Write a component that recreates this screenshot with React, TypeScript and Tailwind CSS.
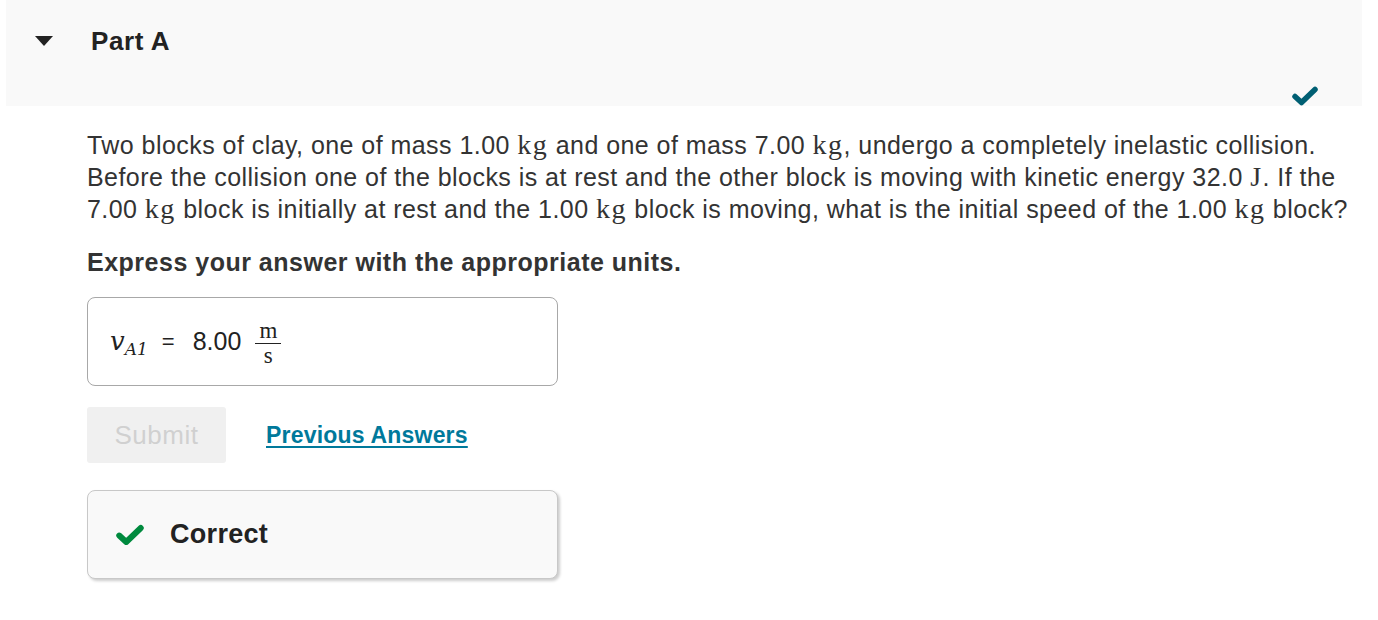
import React from 'react'

const sans = { fontFamily: '"Liberation Sans", Arial, sans-serif' }
const serif = '[font-family:"DejaVu_Serif","Liberation_Serif",serif]'

function Unit({ children }: { children: React.ReactNode }) {
  return <span className="font-['Liberation_Serif',serif] text-[28px] tracking-[1.5px] leading-none">{children}</span>
}

function Check({ className }: { className: string }) {
  return (
    <svg viewBox="0 0 26 20" className={className} fill="none">
      <path d="M3 10.5 L9.5 16.5 L23 3.5" stroke="currentColor" strokeWidth="5.5" strokeLinecap="round" strokeLinejoin="round" />
    </svg>
  )
}

export default function App() {
  return (
    <div className="w-[1378px] h-[620px] bg-white text-[#333]" style={sans}>
      <div className="mx-[6px] w-[1356px] h-[106px] bg-[#f9f9f9] relative">
        <div className="flex items-center pt-[26px]">
          <svg viewBox="0 0 18 10" className="ml-[29px] w-[18px] h-[10px] text-[#222]">
            <path d="M0 0 H18 L9 10 Z" fill="currentColor" />
          </svg>
          <h2 className="ml-[38px] text-[26px] tracking-[0.6px] font-bold text-[#222] leading-[30px]">Part A</h2>
        </div>
        <Check className="absolute right-[44px] top-[86px] w-[26px] h-[20px] text-[#005f73]" />
      </div>

      <div className="pl-[87px] pr-[20px]">
        <p className="mt-[23px] text-[25px] leading-[32px] tracking-[0.45px] text-[#333] whitespace-nowrap">
          Two blocks of clay, one of mass 1.00 <Unit>kg</Unit> and one of mass 7.00 <Unit>kg</Unit>, undergo a completely inelastic collision.
          <br />
          Before the collision one of the blocks is at rest and the other block is moving with kinetic energy 32.0 <Unit>J</Unit>. If the
          <br />
          7.00 <Unit>kg</Unit> block is initially at rest and the 1.00 <Unit>kg</Unit> block is moving, what is the initial speed of the 1.00 <Unit>kg</Unit> block?
        </p>

        <p className="mt-[23px] text-[25px] leading-[28px] font-bold text-[#333] tracking-[0.5px]">Express your answer with the appropriate units.</p>

        <div className="mt-[21px] w-[471px] h-[89px] border-[1.5px] border-[#a8a8a8] rounded-[8px] flex items-center pl-[22px]">
          <span className={`${serif} italic text-[26px] text-[#222]`}>v</span>
          <span className={`${serif} italic text-[17px] text-[#222] mt-[16px]`}>A1</span>
          <span className="ml-[14px] text-[22px] text-[#222]">=</span>
          <span className="ml-[18px] text-[25px] text-[#222]">8.00</span>
          <span className="ml-[14px] flex flex-col items-center mt-[4px]">
            <span className="font-['Liberation_Serif',serif] text-[23px] leading-[20px] text-[#222] px-[1px]">m</span>
            <span className="w-[26px] h-[1.5px] bg-[#222] my-[2px]" />
            <span className="font-['Liberation_Serif',serif] text-[23px] leading-[20px] text-[#222]">s</span>
          </span>
        </div>

        <div className="mt-[21px] flex items-center">
          <button className="w-[139px] h-[56px] bg-[#f0f0f0] rounded-[3px] text-[26px] tracking-[0.5px] text-[#d0d0d0]">Submit</button>
          <a className="ml-[40px] text-[23px] font-bold text-[#00799b] underline underline-offset-[3px] tracking-[0.2px]">Previous Answers</a>
        </div>

        <div className="mt-[27px] w-[471px] h-[89px] bg-[#f9f9f9] border-[1.5px] border-[#c8c8c8] rounded-[8px] shadow-[2px_2px_3px_rgba(0,0,0,0.2)] flex items-center">
          <Check className="ml-[28px] w-[28px] h-[22px] text-[#008a3e]" />
          <span className="ml-[26px] text-[27px] font-bold text-[#222] tracking-[0.3px]">Correct</span>
        </div>
      </div>
    </div>
  )
}
